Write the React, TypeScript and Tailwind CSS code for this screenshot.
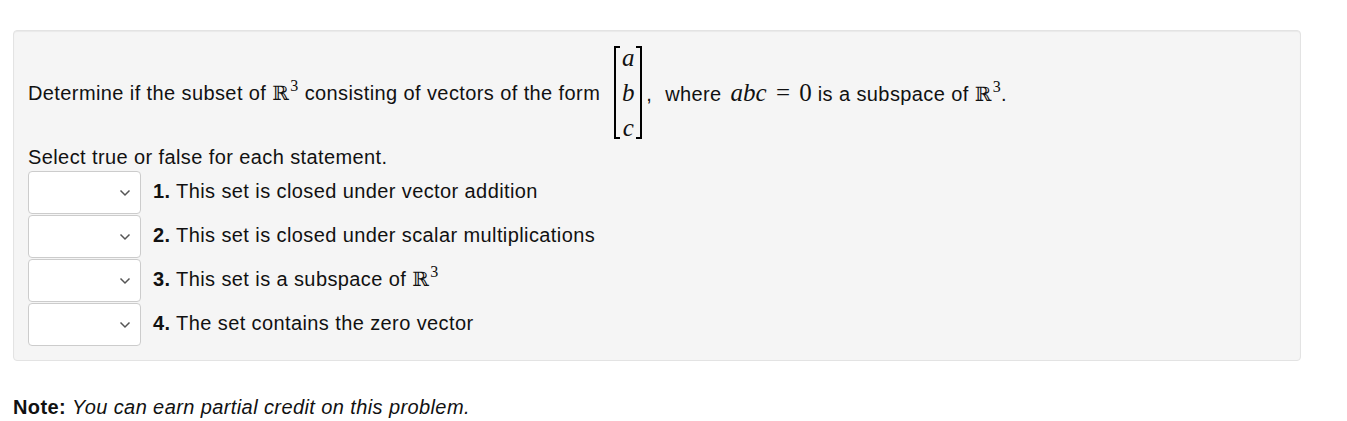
import React from 'react'

function R3() {
  return (
    <span className="inline-flex items-start font-['DejaVu_Serif',serif] leading-none">
      <span className="text-[20px]">ℝ</span>
      <span className="-mt-[5px] ml-[1px] font-['Liberation_Serif',serif] text-[16px]">3</span>
    </span>
  )
}

function Matrix() {
  return (
    <span className="ml-[14px] mr-[4px] inline-flex h-[93px] items-stretch tracking-normal">
      <span className="w-[6px] border-y-2 border-l-2 border-black" />
      <span className="flex w-[16px] flex-col items-center justify-center font-['Liberation_Serif',serif] text-[25px] italic">
        <span className="h-[35px] leading-[35px]">a</span>
        <span className="h-[35px] leading-[35px]">b</span>
        <span className="h-[35px] leading-[35px]">c</span>
      </span>
      <span className="w-[6px] border-y-2 border-r-2 border-black" />
    </span>
  )
}

const statements: { n: number; text: React.ReactNode }[] = [
  { n: 1, text: 'This set is closed under vector addition' },
  { n: 2, text: 'This set is closed under scalar multiplications' },
  {
    n: 3,
    text: (
      <>
        This set is a subspace of <R3 />
      </>
    ),
  },
  { n: 4, text: 'The set contains the zero vector' },
]

function Select() {
  return (
    <div className="relative h-[43px] w-[113px] shrink-0 rounded-[4px] border border-[#cccccc] bg-white">
      <svg
        className="absolute right-[9px] top-[17px]"
        width="12"
        height="8"
        viewBox="0 0 12 8"
        fill="none"
        stroke="#555"
        strokeWidth="1.5"
      >
        <path d="M1.5 1.5 L6 6 L10.5 1.5" />
      </svg>
    </div>
  )
}

export default function App() {
  return (
    <div className="min-h-[421px] bg-white pl-[13px] pt-[30px] font-['Liberation_Sans',Arial,sans-serif] text-[20px] tracking-[0.4px] text-[#111]">
      <div className="w-[1288px] rounded-[4px] border border-[#e3e3e3] bg-[#f5f5f5] px-[14px] pb-[14px] pt-[15px] shadow-[inset_0_1px_1px_rgba(0,0,0,0.05)]">
        <div className="flex items-center">
          <span>
            Determine if the subset of <R3 /> consisting of vectors of the form
          </span>
          <Matrix />
          <span>
            , <span className="ml-[7px]">where</span>{' '}
            <span className="ml-[3px] font-['Liberation_Serif',serif] text-[25px] tracking-normal">
              <i>abc</i> <span className="mx-[3px]">=</span> 0
            </span>{' '}
            is a subspace of <R3 />.
          </span>
        </div>
        <p className="mt-[7px] leading-[22px]">Select true or false for each statement.</p>
        <div className="mt-[3px] flex flex-col gap-[1px]">
          {statements.map((s) => (
            <div key={s.n} className="flex items-start gap-[12px]">
              <Select />
              <div className="pt-[9px] leading-[22px]">
                <b>{s.n}.</b> {s.text}
              </div>
            </div>
          ))}
        </div>
      </div>
      <p className="mt-[35px] leading-[22px]">
        <b>Note:</b> <i>You can earn partial credit on this problem.</i>
      </p>
    </div>
  )
}
